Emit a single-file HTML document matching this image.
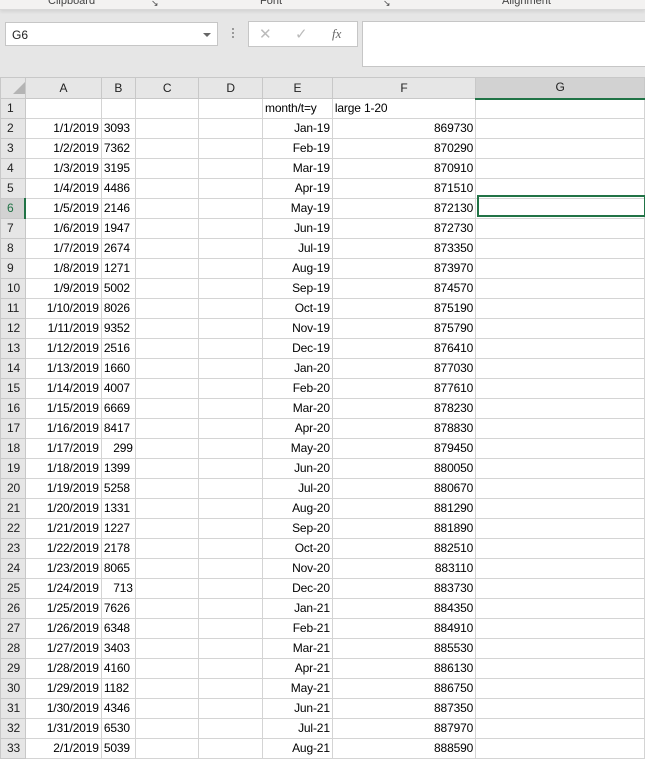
<!DOCTYPE html>
<html><head><meta charset="utf-8"><style>
*{margin:0;padding:0;box-sizing:border-box}
body{width:645px;height:745px;overflow:hidden;background:#e6e6e6;font-family:"Liberation Sans",Arial,sans-serif;position:relative}
.rib{position:absolute;left:0;top:0;width:645px;height:10px;background:#f3f2f1;border-bottom:1px solid #d8d8d8;box-shadow:0 2px 3px rgba(0,0,0,.08);font-size:11px;color:#444;overflow:hidden}
.rib span{position:absolute;top:-5px}
.nb{position:absolute;left:5px;top:22px;width:213px;height:24px;background:#fff;border:1px solid #c6c6c6;font-size:12px;padding:5px 0 0 6px;color:#222}
.nb i{position:absolute;right:6px;top:10px;border:4px solid transparent;border-top:4px solid #666;border-bottom:0}
.dots{position:absolute;left:232px;top:28px;width:2px;height:12px;background:repeating-linear-gradient(#999 0 2px,transparent 2px 4px)}
.fb{position:absolute;left:248px;top:21px;width:110px;height:26px;background:#fff;border:1px solid #c6c6c6;color:#bbb;font-size:15px}
.fb span{position:absolute;top:3px}
.fx{position:absolute;left:362px;top:21px;width:290px;height:46px;background:#fff;border:1px solid #c6c6c6}
table{position:absolute;left:0;top:77px;border-collapse:collapse;table-layout:fixed;font-size:12px;letter-spacing:-0.15px;color:#000;background:#fff}
td{height:20px;border:1px solid #d4d4d4;white-space:nowrap;overflow:hidden;padding:0 2px;text-align:right;line-height:19px}
tr.h td{height:19px;background:#e6e6e6;text-align:center;border-color:#c8c8c8;color:#222}
td.r{background:#e6e6e6;text-align:left;padding-left:6px;border-color:#c8c8c8;color:#222}
td.l{text-align:left;overflow:visible}
tr.h td.g{border-bottom:2px solid #217346;background:#d2d2d2}
td.sel{background:#d2d2d2;color:#217346;border-right:2px solid #217346}
.cur{position:absolute;left:477px;top:195px;width:169px;height:22px;border:2px solid #217346}
</style></head><body>
<div class="rib"><span style="left:48px">Clipboard</span><span style="left:151px;font-size:9px;top:-2px">↘</span><span style="left:260px">Font</span><span style="left:383px;font-size:9px;top:-2px">↘</span><span style="left:502px">Alignment</span></div>
<div class="nb">G6<i></i></div>
<div class="dots"></div>
<div class="fb"><span style="left:10px">✕</span><span style="left:46px">✓</span><span style="left:83px;color:#666;font-family:'Liberation Serif',serif;font-style:italic;font-size:13px;top:4px">fx</span></div>
<div class="fx"></div>
<table>
<colgroup><col style="width:25px"><col style="width:76px"><col style="width:34px"><col style="width:64px"><col style="width:64px"><col style="width:70px"><col style="width:144px"><col style="width:170px"></colgroup>
<tr class="h"><td style="background:#e6e6e6"><svg width="14" height="14" style="position:relative;top:3px;left:6px"><path d="M13 1V13H1Z" fill="#b4b4b4"/></svg></td><td>A</td><td>B</td><td>C</td><td>D</td><td>E</td><td>F</td><td class="g">G</td></tr>
<tr><td class="r">1</td><td></td><td></td><td></td><td></td><td class="l" style="padding-left:2px">month/t=y</td><td class="l">large 1-20</td><td></td></tr>
<tr><td class="r">2</td><td>1/1/2019</td><td class="l">3093</td><td></td><td></td><td>Jan-19</td><td>869730</td><td></td></tr>
<tr><td class="r">3</td><td>1/2/2019</td><td class="l">7362</td><td></td><td></td><td>Feb-19</td><td>870290</td><td></td></tr>
<tr><td class="r">4</td><td>1/3/2019</td><td class="l">3195</td><td></td><td></td><td>Mar-19</td><td>870910</td><td></td></tr>
<tr><td class="r">5</td><td>1/4/2019</td><td class="l">4486</td><td></td><td></td><td>Apr-19</td><td>871510</td><td></td></tr>
<tr><td class="r sel">6</td><td>1/5/2019</td><td class="l">2146</td><td></td><td></td><td>May-19</td><td>872130</td><td></td></tr>
<tr><td class="r">7</td><td>1/6/2019</td><td class="l">1947</td><td></td><td></td><td>Jun-19</td><td>872730</td><td></td></tr>
<tr><td class="r">8</td><td>1/7/2019</td><td class="l">2674</td><td></td><td></td><td>Jul-19</td><td>873350</td><td></td></tr>
<tr><td class="r">9</td><td>1/8/2019</td><td class="l">1271</td><td></td><td></td><td>Aug-19</td><td>873970</td><td></td></tr>
<tr><td class="r">10</td><td>1/9/2019</td><td class="l">5002</td><td></td><td></td><td>Sep-19</td><td>874570</td><td></td></tr>
<tr><td class="r">11</td><td>1/10/2019</td><td class="l">8026</td><td></td><td></td><td>Oct-19</td><td>875190</td><td></td></tr>
<tr><td class="r">12</td><td>1/11/2019</td><td class="l">9352</td><td></td><td></td><td>Nov-19</td><td>875790</td><td></td></tr>
<tr><td class="r">13</td><td>1/12/2019</td><td class="l">2516</td><td></td><td></td><td>Dec-19</td><td>876410</td><td></td></tr>
<tr><td class="r">14</td><td>1/13/2019</td><td class="l">1660</td><td></td><td></td><td>Jan-20</td><td>877030</td><td></td></tr>
<tr><td class="r">15</td><td>1/14/2019</td><td class="l">4007</td><td></td><td></td><td>Feb-20</td><td>877610</td><td></td></tr>
<tr><td class="r">16</td><td>1/15/2019</td><td class="l">6669</td><td></td><td></td><td>Mar-20</td><td>878230</td><td></td></tr>
<tr><td class="r">17</td><td>1/16/2019</td><td class="l">8417</td><td></td><td></td><td>Apr-20</td><td>878830</td><td></td></tr>
<tr><td class="r">18</td><td>1/17/2019</td><td>299</td><td></td><td></td><td>May-20</td><td>879450</td><td></td></tr>
<tr><td class="r">19</td><td>1/18/2019</td><td class="l">1399</td><td></td><td></td><td>Jun-20</td><td>880050</td><td></td></tr>
<tr><td class="r">20</td><td>1/19/2019</td><td class="l">5258</td><td></td><td></td><td>Jul-20</td><td>880670</td><td></td></tr>
<tr><td class="r">21</td><td>1/20/2019</td><td class="l">1331</td><td></td><td></td><td>Aug-20</td><td>881290</td><td></td></tr>
<tr><td class="r">22</td><td>1/21/2019</td><td class="l">1227</td><td></td><td></td><td>Sep-20</td><td>881890</td><td></td></tr>
<tr><td class="r">23</td><td>1/22/2019</td><td class="l">2178</td><td></td><td></td><td>Oct-20</td><td>882510</td><td></td></tr>
<tr><td class="r">24</td><td>1/23/2019</td><td class="l">8065</td><td></td><td></td><td>Nov-20</td><td>883110</td><td></td></tr>
<tr><td class="r">25</td><td>1/24/2019</td><td>713</td><td></td><td></td><td>Dec-20</td><td>883730</td><td></td></tr>
<tr><td class="r">26</td><td>1/25/2019</td><td class="l">7626</td><td></td><td></td><td>Jan-21</td><td>884350</td><td></td></tr>
<tr><td class="r">27</td><td>1/26/2019</td><td class="l">6348</td><td></td><td></td><td>Feb-21</td><td>884910</td><td></td></tr>
<tr><td class="r">28</td><td>1/27/2019</td><td class="l">3403</td><td></td><td></td><td>Mar-21</td><td>885530</td><td></td></tr>
<tr><td class="r">29</td><td>1/28/2019</td><td class="l">4160</td><td></td><td></td><td>Apr-21</td><td>886130</td><td></td></tr>
<tr><td class="r">30</td><td>1/29/2019</td><td class="l">1182</td><td></td><td></td><td>May-21</td><td>886750</td><td></td></tr>
<tr><td class="r">31</td><td>1/30/2019</td><td class="l">4346</td><td></td><td></td><td>Jun-21</td><td>887350</td><td></td></tr>
<tr><td class="r">32</td><td>1/31/2019</td><td class="l">6530</td><td></td><td></td><td>Jul-21</td><td>887970</td><td></td></tr>
<tr><td class="r">33</td><td>2/1/2019</td><td class="l">5039</td><td></td><td></td><td>Aug-21</td><td>888590</td><td></td></tr>
</table>
<div class="cur"></div>
</body></html>
